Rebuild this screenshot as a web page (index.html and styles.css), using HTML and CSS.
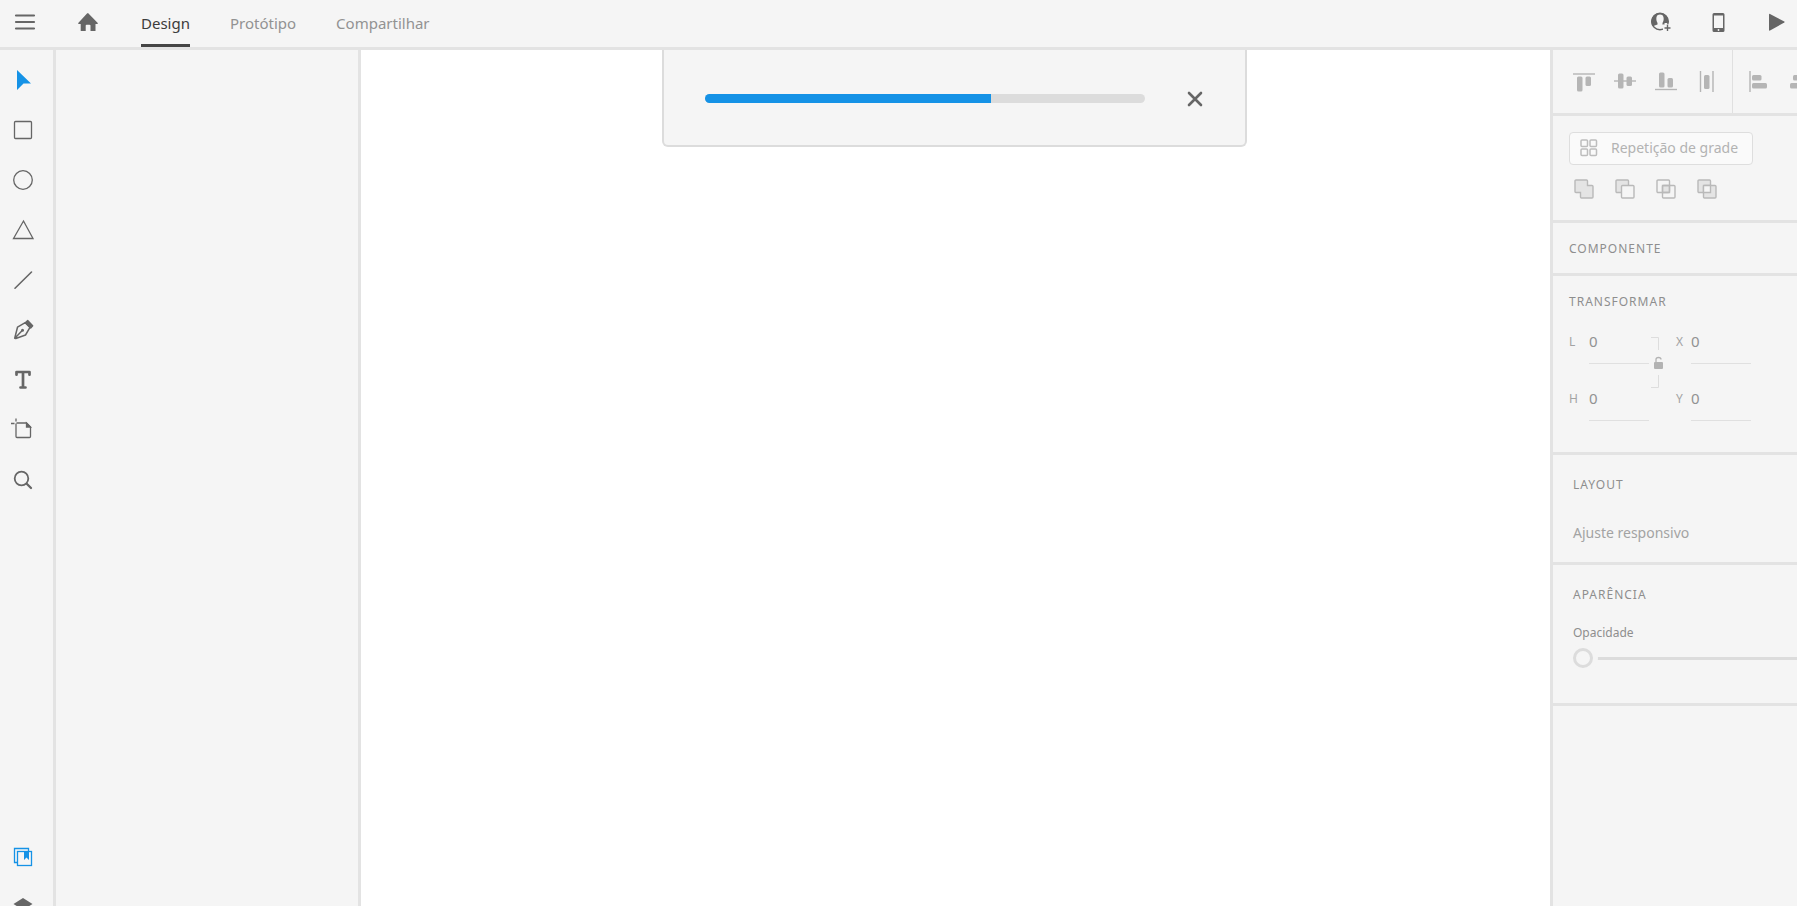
FILE: index.html
```html
<!DOCTYPE html>
<html lang="pt-BR">
  <head>
    <meta charset="UTF-8" />
    <meta name="viewport" content="width=device-width, initial-scale=1.0" />
    <title>Design</title>
    <link rel="stylesheet" href="styles.css">
  </head>
  <body>
    <header class="topbar">
      <button type="button" class="icon-btn menu-btn" aria-label="Menu">
        <svg width="24" height="24" viewBox="0 0 24 24" stroke="#666" stroke-width="2.200" stroke-linecap="round"><path d="M3 5.500h18M3 12h18M3 18.500h18" /></svg>
      </button>
      <a href="#" class="home" aria-label="Início">
        <svg width="24" height="24" viewBox="0 0 24 24" fill="#666"><path d="M12 3L22 13.200 21.300 14H19.500V21H14.500V15.500Q14.500 14.700 13.500 14.700H10.700Q9.700 14.700 9.700 15.500V21H4.700V14H2.700L2 13.200L11 3.600Q12 2.500 13 3.600Z" /></svg>
      </a>
      <nav class="tabs">
        <a href="#" class="tab active">Design</a>
        <a href="#" class="tab">Protótipo</a>
        <a href="#" class="tab">Compartilhar</a>
      </nav>
      <div class="actions">
        <button type="button" class="icon-btn" aria-label="Convidar">
          <svg width="24" height="24" viewBox="0 0 24 24"><circle cx="11" cy="11.500" r="8.300" fill="none" stroke="#666" stroke-width="1.400" /><path d="M11 3a8.500 8.500 0 0 0-7 13.500Q5 15.300 8.500 14.500V13Q7.300 11 7.300 9Q7.300 4.600 11 4.600T14.700 9Q14.700 11 13.500 13V14.500L15.500 15.200V13H19.300A8.500 8.500 0 0 0 11 3Z" fill="#666" /><path d="M14 14.500h8v8h-8z" fill="#f5f5f5" /><path d="M18.500 15v6M15.500 18h6" stroke="#666" stroke-width="1.400" /></svg>
        </button>
        <button type="button" class="icon-btn" aria-label="Visualizar no dispositivo">
          <svg width="24" height="24" viewBox="0 0 24 24"><path fill-rule="evenodd" fill="#666" d="M7 3h9q1.500 0 1.500 1.500v16q0 1.500-1.500 1.500h-9Q5.500 22 5.500 20.500v-16Q5.500 3 7 3ZM7 5.500v12.500h9V5.500Z" /><circle cx="11.500" cy="20" r=".9" fill="#f5f5f5" /></svg>
        </button>
        <button type="button" class="icon-btn" aria-label="Reproduzir">
          <svg width="24" height="24" viewBox="0 0 24 24" fill="#666"><path d="M4 4.500Q4 3.500 5 4L19.300 11.500Q20 12 19.300 12.500L5 20.500Q4 21 4 20Z" /></svg>
        </button>
      </div>
    </header>

    <div class="workspace">
      <aside class="toolbar">
        <button type="button" class="tool" aria-label="Selecionar"><svg width="24" height="24" viewBox="0 0 24 24" fill="#1592e6"><path d="M6 2L20 15.500H12.500L6 22Z" /></svg></button>
        <button type="button" class="tool" aria-label="Retângulo"><svg width="24" height="24" viewBox="0 0 24 24"><rect x="3.500" y="3.500" width="17" height="17" rx="1" /></svg></button>
        <button type="button" class="tool" aria-label="Elipse"><svg width="24" height="24" viewBox="0 0 24 24"><circle cx="12" cy="12" r="9.300" /></svg></button>
        <button type="button" class="tool" aria-label="Polígono"><svg width="24" height="24" viewBox="0 0 24 24"><path d="M12.500 3L22 20.500H2.500Z" /></svg></button>
        <button type="button" class="tool" aria-label="Linha"><svg width="24" height="24" viewBox="0 0 24 24"><path d="M4 20.200L20.500 4" stroke-width="1.600" stroke-linecap="round" /></svg></button>
        <button type="button" class="tool" aria-label="Caneta"><svg width="24" height="24" viewBox="0 0 24 24"><path d="M3.700 20.200L6.500 9.200L14.200 4.700L19 9.400L14.500 17L4.800 20.500ZM4.300 19.700L11 12.700" stroke-width="1.500" stroke-linejoin="round" /><circle cx="11.500" cy="12.200" r="1.500" fill="#666" stroke="none" /><path d="M14.500 4.500L16.700 2.500 21.700 7.700 19.700 10Z" fill="#666" stroke-linejoin="round" /></svg></button>
        <button type="button" class="tool" aria-label="Texto"><svg width="24" height="24" viewBox="0 0 24 24"><path d="M5.500 6.700V4H18.500V6.700M12 4V19.500M9.500 19.500H14.500" stroke-width="2.700" stroke-linecap="round" stroke-linejoin="round" /></svg></button>
        <button type="button" class="tool" aria-label="Prancheta"><svg width="24" height="24" viewBox="0 0 24 24"><path d="M5.500 5H15.500L19.500 9V18.500Q19.500 19.500 18.500 19.500H6Q5 19.500 5 18.500V5.500M5 .5V3.500M0 5.500H3.500" /><path d="M15.500 5V9H19.500Z" fill="#666" /></svg></button>
        <button type="button" class="tool" aria-label="Zoom"><svg width="24" height="24" viewBox="0 0 24 24"><circle cx="10.500" cy="10.500" r="6.800" stroke-width="1.800" /><path d="M15.700 15.700L20 20" stroke-width="2.300" stroke-linecap="round" /></svg></button>
        <div class="toolbar-bottom">
          <button type="button" class="tool" aria-label="Ativos"><svg width="24" height="24" viewBox="0 0 24 24"><g stroke="#1592e6"><path d="M6.500 17.500H3.500V3.500H17.500V6" /><rect x="6.500" y="6.500" width="14" height="14" /></g><path d="M13 6.500H18V15L15.500 12.500 13 15Z" fill="#1592e6" stroke="none" /></svg></button>
          <button type="button" class="tool" aria-label="Camadas"><svg width="24" height="24" viewBox="0 0 24 24" fill="#666"><path d="M12 3L21.500 9 12 15 2.500 9Z" /><path d="M3 13L12 19 21 13" /></svg></button>
        </div>
      </aside>

      <aside class="side-panel"></aside>

      <main class="canvas">
        <div class="loader">
          <progress value="65" max="100" aria-label="Carregando"></progress>
          <button type="button" class="icon-btn" aria-label="Fechar">
            <svg width="24" height="24" viewBox="0 0 24 24" stroke="#666" stroke-width="2.600" stroke-linecap="round"><path d="M6 6L18 18M18 6L6 18" /></svg>
          </button>
        </div>
      </main>

      <aside class="inspector">
        <section class="align-row">
          <button type="button" class="align" aria-label="Alinhar acima"><svg width="24" height="24" viewBox="0 0 24 24"><path class="line" d="M1 5h22" /><rect x="5" y="7.500" width="5.500" height="15" rx="1.500" /><rect x="13.500" y="7.500" width="5.500" height="9.500" rx="1.500" /></svg></button>
          <button type="button" class="align" aria-label="Alinhar no meio"><svg width="24" height="24" viewBox="0 0 24 24"><path class="line" d="M1 12h22" /><rect x="5" y="4.500" width="5.500" height="15" rx="1.500" /><rect x="13.500" y="7.500" width="5.500" height="9.500" rx="1.500" /></svg></button>
          <button type="button" class="align" aria-label="Alinhar abaixo"><svg width="24" height="24" viewBox="0 0 24 24"><path class="line" d="M1 20.500h22" /><rect x="5" y="3.500" width="5.500" height="15" rx="1.500" /><rect x="13.500" y="9" width="5.500" height="9.500" rx="1.500" /></svg></button>
          <button type="button" class="align" aria-label="Distribuir horizontalmente"><svg width="24" height="24" viewBox="0 0 24 24"><path class="line" d="M5.500 2v21M18 2v21" /><rect x="9" y="6" width="5.500" height="14" rx="1.500" /></svg></button>
          <div class="divider"></div>
          <button type="button" class="align" aria-label="Alinhar à esquerda"><svg width="24" height="24" viewBox="0 0 24 24"><path class="line" d="M3 2v21" /><rect x="5" y="6" width="9.500" height="5.500" rx="1.500" /><rect x="5" y="14" width="15" height="5.500" rx="1.500" /></svg></button>
          <button type="button" class="align" aria-label="Alinhar ao centro"><svg width="24" height="24" viewBox="0 0 24 24"><path class="line" d="M12 2v21" /><rect x="5" y="6" width="13" height="5.500" rx="1.500" /><rect x="2" y="14" width="19" height="5.500" rx="1.500" /></svg></button>
        </section>

        <section class="repeat">
          <button type="button" class="grid-btn">
            <svg width="18" height="18" viewBox="0 0 18 18" fill="none" stroke="#bdbdbd" stroke-width="1.500"><rect x="1" y="1" width="6.500" height="6.500" rx="1" /><rect x="10" y="1" width="6.500" height="6.500" rx="1" /><rect x="1" y="10" width="6.500" height="6.500" rx="1" /><rect x="10" y="10" width="6.500" height="6.500" rx="1" /></svg>
            Repetição de grade
          </button>
          <div class="boolean-row">
            <button type="button" class="align" aria-label="Adicionar"><svg class="bool" width="24" height="24" viewBox="0 0 24 24"><path fill="#e4e4e4" d="M4 3H14.500Q15.500 3 15.500 4V8.500H20Q21 8.500 21 9.500V20Q21 21 20 21H9.500Q8.500 21 8.500 20V15.500H4Q3 15.500 3 14.500V4Q3 3 4 3Z" /></svg></button>
            <button type="button" class="align" aria-label="Subtrair"><svg class="bool" width="24" height="24" viewBox="0 0 24 24"><rect x="3" y="3" width="12.500" height="12.500" rx="1" fill="#e4e4e4" /><rect x="8.500" y="8.500" width="12.500" height="12.500" rx="1" fill="#f5f5f5" /></svg></button>
            <button type="button" class="align" aria-label="Interseção"><svg class="bool" width="24" height="24" viewBox="0 0 24 24"><path d="M8.500 8.500h7v7h-7z" fill="#e4e4e4" /><rect x="3" y="3" width="12.500" height="12.500" rx="1" /><rect x="8.500" y="8.500" width="12.500" height="12.500" rx="1" /></svg></button>
            <button type="button" class="align" aria-label="Excluir sobreposição"><svg class="bool" width="24" height="24" viewBox="0 0 24 24"><rect x="3" y="3" width="12.500" height="12.500" rx="1" fill="#e4e4e4" /><rect x="8.500" y="8.500" width="12.500" height="12.500" rx="1" fill="#e4e4e4" /><path d="M8.500 8.500h7v7h-7z" fill="#f5f5f5" /></svg></button>
          </div>
        </section>

        <section class="component">
          <h2>COMPONENTE</h2>
        </section>

        <section class="transform">
          <h2>TRANSFORMAR</h2>
          <div class="transform-body">
            <div class="fields">
              <div class="field"><label for="largura">L</label><input type="text" id="largura" value="0" /></div>
              <div class="field"><label for="altura">H</label><input type="text" id="altura" value="0" /></div>
            </div>
            <svg class="lock" width="16" height="56" viewBox="0 0 16 56"><path d="M2 2.500H9.500V15M9.500 40V52.500H2" fill="none" stroke="#ddd" /><rect x="5" y="27" width="9" height="7" rx="1" fill="#b3b3b3" /><path d="M7 27V24.500Q7 22.500 9.500 22.500T12 24.500" fill="none" stroke="#b3b3b3" stroke-width="1.300" /></svg>
            <div class="fields fields-xy">
              <div class="field"><label for="posX">X</label><input type="text" id="posX" value="0" /></div>
              <div class="field"><label for="posY">Y</label><input type="text" id="posY" value="0" /></div>
            </div>
          </div>
        </section>

        <section class="layout">
          <h2>LAYOUT</h2>
          <p>Ajuste responsivo</p>
        </section>

        <section class="appearance">
          <h2>APARÊNCIA</h2>
          <label for="opacity">Opacidade</label>
          <input type="range" id="opacity" min="0" max="100" value="0" />
        </section>
      </aside>
    </div>
  </body>
</html>
```

FILE: styles.css
```css
* {
  box-sizing: border-box;
}

body {
  font-family: "Segoe UI", "Noto Sans", sans-serif;
  font-size: 15px;
  color: #8e8e8e;
  background-color: #f5f5f5;
  margin: 0;
  height: 100vh;
  display: flex;
  flex-direction: column;
  overflow: hidden;
}

button {
  font: inherit;
  color: inherit;
  background: none;
  border: none;
  padding: 0;
  cursor: pointer;
}

svg {
  display: block;
  flex: none;
}

/* Top bar */
.topbar {
  display: flex;
  align-items: center;
  height: 50px;
  flex: none;
  padding: 0 8px 0 13px;
  border-bottom: 3px solid #e3e3e3;
}

.menu-btn {
  margin-bottom: 4px;
}

.home {
  margin: 0 41px 4px 39px;
}

.tabs {
  display: flex;
  align-self: stretch;
  gap: 40px;
}

.tab {
  color: #929292;
  text-decoration: none;
  line-height: 46px;
  border-bottom: 3px solid transparent;
  height: 47px;
}

.tab.active {
  color: #3c3c3c;
  border-bottom-color: #444;
}

.actions {
  display: flex;
  gap: 34px;
  margin-left: auto;
  padding-bottom: 4px;
}

/* Main area */
.workspace {
  display: flex;
  flex: 1;
  min-height: 0;
}

.toolbar {
  display: flex;
  flex-direction: column;
  width: 56px;
  flex: none;
  padding-top: 5px;
  border-right: 3px solid #e3e3e3;
}

.tool {
  display: flex;
  align-items: center;
  padding-left: 11px;
  height: 50px;
  flex: none;
}

.tool svg {
  stroke-width: 1.3;
}

.tool svg:not([fill]) {
  fill: none;
  stroke: #666;
}

.toolbar-bottom {
  margin-top: auto;
  margin-bottom: -26px;
}

.side-panel {
  width: 305px;
  flex: none;
  border-right: 3px solid #e3e3e3;
}

.canvas {
  flex: 1;
  padding-right: 3px;
  background-color: #fff;
}

.loader {
  display: flex;
  align-items: center;
  justify-content: space-between;
  width: 50%;
  max-width: 585px;
  height: 97px;
  margin: 0 auto;
  padding: 2px 38px 0 41px;
  background-color: #f5f5f5;
  border: 2px solid #dcdcdc;
  border-top: none;
  border-radius: 0 0 6px 6px;
}

progress {
  appearance: none;
  width: 440px;
  height: 9px;
  border: none;
  border-radius: 5px;
  overflow: hidden;
}

progress::-webkit-progress-bar {
  background-color: #dcdcdc;
}

progress::-webkit-progress-value {
  background-color: #1592e6;
}

/* Right panel */
.inspector {
  width: 247px;
  flex: none;
  border-left: 3px solid #e3e3e3;
  overflow: hidden;
}

.inspector section {
  border-bottom: 3px solid #e3e3e3;
}

h2 {
  margin: 0;
  font-size: 12px;
  font-weight: normal;
  line-height: 16px;
  letter-spacing: 1px;
}

.align-row {
  display: flex;
  height: 66px;
  padding-left: 10px;
}

.align {
  display: flex;
  align-items: center;
  justify-content: center;
  width: 41px;
  flex: none;
}

.align-row .align {
  padding-bottom: 2px;
}

.align svg {
  fill: #b5b5b5;
}

.line {
  stroke: #b5b5b5;
  stroke-width: 1.4;
}

.divider {
  width: 1px;
  flex: none;
  margin: 0 5px;
  background-color: #e0e0e0;
}

.repeat {
  padding: 16px 16px 19px;
}

.grid-btn {
  display: flex;
  align-items: center;
  gap: 13px;
  height: 33px;
  width: 184px;
  padding: 0 10px 2px;
  color: #b3b3b3;
  font-size: 14px;
  white-space: nowrap;
  background-color: #fafafa;
  border: 1px solid #dedede;
  border-radius: 4px;
}

.boolean-row {
  display: flex;
  margin: 12px 0 0 -6px;
}

.align .bool {
  fill: none;
  stroke: #b9b9b9;
  stroke-width: 1.4;
}

.component {
  padding: 18px 16px 16px;
}

.transform {
  padding: 18px 16px 31px;
}

.transform-body {
  display: flex;
  margin-top: 16px;
}

.fields {
  display: flex;
  flex-direction: column;
  gap: 19px;
}

.field {
  display: flex;
}

.field label {
  width: 20px;
  font-size: 12px;
  line-height: 31px;
  color: #a3a3a3;
}

.field input {
  width: 60px;
  height: 38px;
  padding: 0 0 7px;
  font: inherit;
  color: #929292;
  background: none;
  border: none;
  border-bottom: 1px solid #e0e0e0;
}

.fields-xy {
  margin-left: 11px;
}

.fields-xy label {
  width: 15px;
}

.lock {
  margin-top: 9px;
}

.layout {
  padding: 22px 20px 18px;
}

.layout p {
  margin: 29px 0 0;
  font-size: 14px;
  line-height: 22px;
  color: #a3a3a3;
}

.appearance {
  display: flex;
  flex-direction: column;
  padding: 22px 0 35px 20px;
}

.appearance label {
  margin-top: 21px;
  font-size: 12px;
  line-height: 18px;
}

input[type="range"] {
  appearance: none;
  width: 100%;
  height: 20px;
  margin: 6px 0 0;
  background: none;
}

input[type="range"]::-webkit-slider-runnable-track {
  height: 3px;
  background-color: #dcdcdc;
}

input[type="range"]::-webkit-slider-thumb {
  appearance: none;
  width: 20px;
  height: 20px;
  margin-top: -9px;
  background-color: #f5f5f5;
  border: 3px solid #dcdcdc;
  border-radius: 50%;
  box-shadow: 0 0 0 5px #f5f5f5;
}
```
